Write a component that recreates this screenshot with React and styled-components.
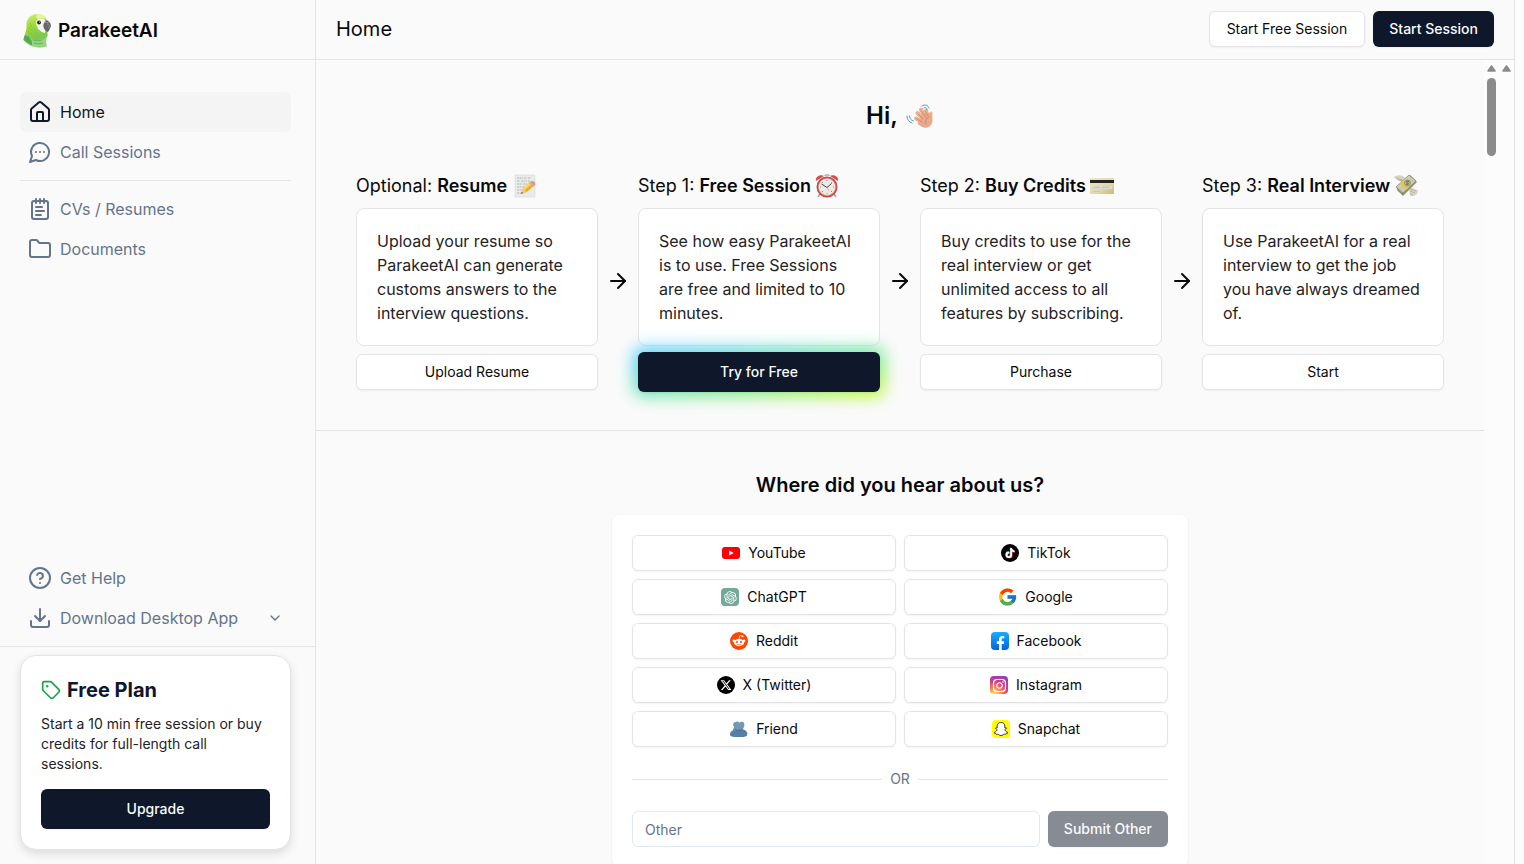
import React from 'react'
import styled, { createGlobalStyle, css } from 'styled-components'
import {
  ArrowRight,
  ChevronDown,
  CircleQuestionMark,
  Download,
  Folder,
  House,
  NotepadText,
  Tag,
} from 'lucide-react'
import { FcGoogle } from 'react-icons/fc'
import { FaFacebookF, FaInstagram, FaSnapchatGhost, FaTiktok } from 'react-icons/fa'
import { FaXTwitter } from 'react-icons/fa6'
import { RiOpenaiFill } from 'react-icons/ri'

const THEME = {
  BACKGROUND: '#fafafa',
  SURFACE: '#ffffff',
  TRACK: '#fcfcfc',
  BORDER: '#e4e4e7',
  ACTIVE: '#f4f4f5',
  PRIMARY: '#0f172a',
  TEXT: '#09090b',
  TEXT_SOFT: '#1f2226',
  MUTED: '#64748b',
  GREEN: '#16a34a',
  THUMB: '#8b8b8b',
}

const GlobalStyle = createGlobalStyle`
  *,
  *::before,
  *::after {
    box-sizing: border-box;
  }

  body {
    margin: 0;
    background: ${THEME.BACKGROUND};
    color: ${THEME.TEXT};
    font-family: Inter, 'Liberation Sans', sans-serif;
    font-size: 16px;
    line-height: 24px;
  }

  h1, h2, h3, p {
    margin: 0;
  }

  button, input {
    font-family: inherit;
  }

  svg {
    flex-shrink: 0;
  }
`

/* ---------- page ---------- */

const Page = styled.div`
  display: flex;
  height: 100vh;
  overflow: hidden;
  padding-right: 9px;
  background: ${THEME.TRACK};
`

const Sidebar = styled.aside`
  display: flex;
  flex-direction: column;
  flex: 0 0 316px;
  background: ${THEME.BACKGROUND};
  border-right: 1px solid ${THEME.BORDER};
`

const Main = styled.main`
  display: flex;
  flex-direction: column;
  flex: 1;
  min-width: 0;
  background: ${THEME.BACKGROUND};
  border-right: 1px solid ${THEME.BORDER};
`

const Bar = styled.header`
  display: flex;
  align-items: center;
  flex: 0 0 60px;
  gap: 8px;
  padding: 0 20px 2px;
  border-bottom: 1px solid ${THEME.BORDER};
`

const Brand = styled.a`
  display: flex;
  align-items: center;
  gap: 4px;
  padding-top: 5px;
  color: ${THEME.TEXT};
  font-size: 19px;
  font-weight: 600;
  line-height: 28px;
  text-decoration: none;
`

const PageTitle = styled.h1`
  flex: 1;
  font-size: 20px;
  font-weight: 400;
  line-height: 28px;
`

/* ---------- shared controls ---------- */

const Button = styled.button`
  display: flex;
  align-items: center;
  justify-content: center;
  gap: 8px;
  height: ${({ $tall }) => ($tall ? 40 : 36)}px;
  width: ${({ $wide }) => ($wide ? '100%' : 'auto')};
  padding: 0 17px;
  border: 1px solid ${THEME.BORDER};
  border-radius: 6px;
  background: ${THEME.SURFACE};
  box-shadow: 0 1px 2px rgba(0, 0, 0, 0.05);
  color: ${THEME.TEXT};
  font-size: 14px;
  font-weight: 400;
  line-height: 20px;
  white-space: nowrap;
  cursor: pointer;

  ${({ $primary }) =>
    $primary &&
    css`
      padding: 0 16px;
      border: 0;
      background: ${THEME.PRIMARY};
      color: #f8fafc;
      font-weight: 500;
    `}

  &:disabled {
    background: #878b94;
    cursor: default;
  }
`

/* ---------- sidebar ---------- */

const Nav = styled.nav`
  display: flex;
  flex-direction: column;
  flex: 1;
  padding: 32px 24px 8px 20px;
`

const NavItem = styled.a`
  display: flex;
  align-items: center;
  gap: 8px;
  height: 40px;
  padding: 0 8px;
  border-radius: 6px;
  background: ${({ $active }) => ($active ? THEME.ACTIVE : 'transparent')};
  color: ${({ $active }) => ($active ? THEME.PRIMARY : THEME.MUTED)};
  text-decoration: none;

  span {
    flex: 1;
  }
`

const NavRule = styled.hr`
  width: 100%;
  height: 1px;
  margin: 8px 0;
  border: 0;
  background: ${THEME.BORDER};
`

const Spacer = styled.div`
  flex: 1;
`

const PlanArea = styled.div`
  padding: 8px 24px 14px 20px;
  border-top: 1px solid ${THEME.BORDER};
`

const PlanCard = styled.section`
  padding: 20px;
  border: 1px solid ${THEME.BORDER};
  border-radius: 16px;
  background: ${THEME.SURFACE};
  box-shadow: 0 4px 10px rgba(0, 0, 0, 0.12);
`

const PlanTitle = styled.h2`
  display: flex;
  align-items: center;
  gap: 6px;
  color: ${THEME.PRIMARY};
  font-size: 20px;
  font-weight: 700;
  line-height: 28px;
`

const PlanText = styled.p`
  padding: 10px 0 15px;
  color: ${THEME.TEXT_SOFT};
  font-size: 14px;
  line-height: 20px;
`

/* ---------- content ---------- */

const Scroller = styled.div`
  display: flex;
  flex: 1;
  min-height: 0;
`

const Content = styled.div`
  flex: 1;
  min-width: 0;
  overflow: hidden;
`

const Section = styled.section`
  display: flex;
  flex-direction: column;
  align-items: center;
  gap: ${({ $gap }) => $gap}px;
  padding: 40px;

  & + & {
    border-top: 1px solid ${THEME.BORDER};
  }
`

const Greeting = styled.h2`
  display: flex;
  align-items: center;
  gap: 8px;
  font-size: 24px;
  font-weight: 600;
  line-height: 32px;
`

const Heading = styled.h2`
  font-size: 20px;
  font-weight: 600;
  line-height: 28px;
`

const Steps = styled.div`
  display: flex;
  align-items: center;
  width: 100%;
`

const StepArrow = styled.div`
  display: flex;
  justify-content: center;
  flex: 0 0 40px;
`

const StepColumn = styled.div`
  display: flex;
  flex-direction: column;
  flex: 1;
  min-width: 0;
  gap: 8px;
`

const StepTitle = styled.h3`
  display: flex;
  align-items: center;
  gap: 4px;
  font-size: 18px;
  font-weight: 400;
  line-height: 28px;
  white-space: nowrap;

  b {
    font-weight: 600;
  }
`

const StepCard = styled.p`
  padding: 20px;
  border: 1px solid ${THEME.BORDER};
  border-radius: 8px;
  background: ${THEME.SURFACE};
  color: ${THEME.TEXT_SOFT};
`

const StepAction = styled.div`
  display: flex;
  align-items: center;
  height: 36px;
`

const Glow = styled.div`
  position: relative;
  z-index: 1;
  width: 100%;

  &::before {
    content: '';
    position: absolute;
    inset: -5px;
    border-radius: 10px;
    background: linear-gradient(to bottom right, #5fd0ff 10%, #74e8ae 50%, #8fee7c 70%, #c0f83c 92%);
    filter: blur(8px);
  }

  ${Button} {
    position: relative;
  }
`

/* ---------- survey ---------- */

const Survey = styled.form`
  display: flex;
  flex-direction: column;
  gap: 20px;
  width: 100%;
  max-width: 576px;
  padding: 20px;
  border-radius: 8px;
  background: ${THEME.SURFACE};
  box-shadow: 0 1px 3px rgba(0, 0, 0, 0.08);
`

const Sources = styled.div`
  display: grid;
  grid-template-columns: 1fr 1fr;
  gap: 8px;
`

const Or = styled.div`
  display: flex;
  align-items: center;
  gap: 8px;
  color: ${THEME.MUTED};
  font-size: 14px;

  &::before,
  &::after {
    content: '';
    flex: 1;
    height: 1px;
    background: ${THEME.BORDER};
  }
`

const OtherRow = styled.div`
  display: flex;
  gap: 8px;
`

const OtherInput = styled.input`
  flex: 1;
  min-width: 0;
  height: 36px;
  padding: 0 12px;
  border: 1px solid #e2e8f0;
  border-radius: 6px;
  background: ${THEME.SURFACE};
  font-size: 14px;

  &::placeholder {
    color: ${THEME.MUTED};
  }
`

const Logo = styled.span`
  display: flex;
  align-items: center;
  justify-content: center;
  width: 18px;
  height: 18px;
  border-radius: ${({ $round }) => ($round ? '9px' : '4px')};
  background: ${({ $fill }) => $fill || 'transparent'};
  color: #ffffff;
`

/* ---------- scroll bars ---------- */

const Track = styled.div`
  display: flex;
  flex-direction: column;
  align-items: center;
  flex: 0 0 15px;
  gap: 6px;
  padding-top: 5px;
  background: ${THEME.TRACK};
`

const Thumb = styled.div`
  width: 9px;
  height: 78px;
  border-radius: 5px;
  background: ${THEME.THUMB};
`

const ScrollBar = ({ thumb = false }) => (
  <Track aria-hidden="true">
    <svg width="9" height="7" viewBox="0 0 9 7">
      <path d="M4.500 1 8 6H1Z" fill={THEME.THUMB} stroke={THEME.THUMB} strokeWidth="1.600" strokeLinejoin="round" />
    </svg>
    {thumb && <Thumb />}
  </Track>
)

/* ---------- drawings ---------- */

const Parrot = () => (
  <svg width="34" height="36" viewBox="0 0 34 36" aria-hidden="true">
    <defs>
      <linearGradient id="head" x1="0" y1="0" x2="0.300" y2="1">
        <stop offset="0" stopColor="#d6ef78" />
        <stop offset="0.500" stopColor="#9fd93c" />
        <stop offset="1" stopColor="#7cc854" />
      </linearGradient>
    </defs>
    <path d="M6 20C4 22 4 24 3.500 27c2 3 5 5 9 6.500 5 1.500 10 1.500 14.500 0-1.500-4-1-7 .5-12Z" fill="#96d47f" />
    <path d="M18 1C10 1 6 6 6.500 13c0 4-1 6-1.500 8 3 4 8 6 12 6 5 0 9-1 10.500-4V15C28 6 25 1 18 1Z" fill="url(#head)" />
    <path d="M5 22c-1 2-1 3-1.500 5l8 5.500c2-3-1-8-6.500-10.500Z" fill="#55ab52" />
    <path d="M9 14c2 4 6 5 10 8M8 18c3 4 6 4 9 6M10 10c1 4 3 6 6 7" stroke="#7cc138" strokeWidth="0.800" fill="none" />
    <path d="M13 27c3 1 6 1 9 0M14 30c3 1 6 1 9 0M6 24l3 5M8 23l3 5" stroke="#4da352" strokeWidth="0.700" fill="none" />
    <path d="M16 8c3-4 9-3 10 1l-1 11c-5-1-9-5-9-12Z" fill="#f6f7f0" />
    <path d="M18 1c4 0 7 2 8 5-3-1-5-1-8 0-2-1-3-3 0-5Z" fill="#eaf3a0" />
    <circle cx="19" cy="9.500" r="1.900" fill="#20241f" />
    <circle cx="19.500" cy="9" r="0.500" fill="#fff" />
    <path d="M24 10c2-3 7-2 7 3-1 3-2 4-3 6-3-1-6-5-4-9Z" fill="#63686d" />
    <path d="M24.500 8c1-1.500 3.500-1 4.500.5L28 10l-3-.5Z" fill="#a0a3a3" />
    <circle cx="27" cy="8.500" r="0.700" fill="#30343a" />
    <path d="M27 11c2 0 3 2 2 4" stroke="#8c9294" strokeWidth="1" fill="none" />
  </svg>
)

const MessageDots = () => (
  <svg
    width="24"
    height="24"
    viewBox="0 0 24 24"
    fill="none"
    stroke="currentColor"
    strokeWidth="2"
    strokeLinecap="round"
    strokeLinejoin="round"
    aria-hidden="true"
  >
    <path d="M7.900 20A9 9 0 1 0 4 16.100L2 22Z" />
    <path d="M8 12h.01M12 12h.01M16 12h.01" />
  </svg>
)

const Wave = () => (
  <svg width="28" height="28" viewBox="0 0 28 28" aria-hidden="true">
    <g fill="none" stroke="#edb091" strokeLinecap="round">
      <path d="m20 19-8.500-8" strokeWidth="4" />
      <path d="m21 18-6-10.500" strokeWidth="4" />
      <path d="m19 21-9-4.500" strokeWidth="4" />
      <path d="m19 23-5.500-2" strokeWidth="4" />
      <path d="m23 17-3-8" strokeWidth="4" />
      <path d="m24 19 1-8" strokeWidth="3" />
    </g>
    <path d="M15 14c3-3 8-4 11-1 1 5 1 9-3 12-4 2-8 0-10-3Z" fill="#e9a98b" />
    <path d="m12 12 5 5m-2-8 5 6m-9 2 5 3M19 9l3 5" fill="none" stroke="#cb8065" strokeWidth="0.800" strokeLinecap="round" />
    <path d="M23 15c-3 1-4 4-3 7" fill="none" stroke="#cb8065" strokeWidth="0.900" />
    <path d="M16 4c3-2 6-1 7 2M18 6c2-1 3 0 3 2M1 14c0 4 2 6 5 7M3.500 14c0 2 1 4 4 5" fill="none" stroke="#4e9bc5" strokeWidth="1" strokeLinecap="round" />
  </svg>
)

const Memo = () => (
  <svg width="26" height="24" viewBox="-2 0 26 24" aria-hidden="true">
    <path d="M2 1h20v22H2Z" fill="#e9eaea" stroke="#d2d3d3" strokeWidth="0.500" />
    <path d="M4 4h6m1 0h3m1 0h3M4 7h3m1 0h6m1 0h2M4 10h5m1 0h4M4 13h7M4 16h5M4 19h6" stroke="#b5b7b8" strokeWidth="1" strokeDasharray="2 .6" />
    <path d="m8 20 2-6 8-7 4 4-8 7Z" fill="#f3bd32" />
    <path d="m9.500 16 9-8" stroke="#ffdc68" strokeWidth="1.800" />
    <path d="m12 18 9-8" stroke="#db9524" strokeWidth="1" />
    <path d="m17 8 2-1c2 0 4 1 3 4l-1 1Z" fill="#e89187" />
    <path d="m16.500 8.500 4 4" stroke="#b5b8b9" strokeWidth="1.200" />
    <path d="m8 20 2-6c1 2 2 3 4 4Z" fill="#edc891" />
    <path d="m8 20 1-2 1 1Z" fill="#4a4039" />
  </svg>
)

const Clock = () => (
  <svg width="24" height="24" viewBox="0 0 24 24" aria-hidden="true">
    <path d="m5 20-2 3m16-3 2 3" stroke="#aaa4a0" strokeWidth="1.500" />
    <path d="M1 7c-1-4 4-7 8-5ZM23 7c1-4-4-7-8-5Z" fill="#d44b4d" />
    <path d="M10 2V1h4v1" fill="none" stroke="#939393" />
    <circle cx="12" cy="13" r="10.500" fill="#c84646" />
    <circle cx="12" cy="13" r="8.500" fill="#eeebe7" stroke="#f0aaa5" strokeWidth="0.600" />
    <path d="M12 6v1m0 12v1m-7-7h1m12 0h1M7 8l1 1m8 8 1 1m0-10-1 1m-8 8-1 1" stroke="#777" strokeWidth="0.800" />
    <path d="m6.500 10 5.500 3.500 4.500-4" fill="none" stroke="#444" strokeWidth="1" />
    <path d="m12 13 2 4" stroke="#db7570" strokeWidth="0.600" />
  </svg>
)

const CreditCard = () => (
  <svg width="24" height="24" viewBox="0 0 24 24" aria-hidden="true">
    <defs>
      <linearGradient id="gold" x1="0" y1="0" x2="1" y2="1">
        <stop offset="0" stopColor="#eee7bd" />
        <stop offset="0.600" stopColor="#e2d9aa" />
        <stop offset="1" stopColor="#c8b873" />
      </linearGradient>
    </defs>
    <rect y="4" width="24" height="16" rx="1" fill="url(#gold)" />
    <path d="M0 6h24v3H0Z" fill="#242321" />
    <path d="M2 12h20v3H2Z" fill="#dcdad0" />
    <path d="M4 14c3-2 4 0 6-1m2 1c3-2 4 0 7-1" fill="none" stroke="#b4b3ab" strokeWidth="0.700" />
    <path d="M3 17.500h7" stroke="#c9bf94" strokeWidth="0.700" />
  </svg>
)

const Money = () => (
  <svg width="24" height="24" viewBox="0 0 24 24" aria-hidden="true">
    <path d="M8 8C5 6 2 6 0 3c3-2 8-3 11 1Z" fill="#d5d2bd" />
    <path d="M15 13c4 0 5 3 9 3 0 4-3 7-8 6Z" fill="#d9d5c8" />
    <path d="m2 4 6 2m-4 0 5 1m7 8 6 2m-6 0 5 2m-5 0 3 2" stroke="#aaa58e" strokeWidth="0.700" />
    <path d="m3 15 13-14 7 7L9 22Z" fill="#92936f" />
    <path d="m2 13 13-12 7 6L8 20Z" fill="#cbcbae" stroke="#818360" strokeWidth="0.700" />
    <path d="m6 9 4-3 6 6-4 4Z" fill="#e6c45d" />
    <circle cx="13.500" cy="9" r="3" fill="#b8b790" stroke="#7d7e58" strokeWidth="0.600" />
    <path d="M15 7.500c-3-1-3 1-1.500 1.500s1.500 2-1.500 1" fill="none" stroke="#55563a" strokeWidth="0.900" />
    <path d="m3 16 6 5M3 14l6 5" stroke="#666849" strokeWidth="0.600" />
  </svg>
)

const YouTubeLogo = () => (
  <svg width="18" height="18" viewBox="0 0 18 18" aria-hidden="true">
    <rect y="3" width="18" height="12" rx="3" fill="#ff0000" />
    <path d="M7.200 6.400v5.200L11.800 9Z" fill="#ffffff" />
  </svg>
)

const ChatGptLogo = () => (
  <Logo $fill="#74a99a">
    <RiOpenaiFill size={15} />
  </Logo>
)

const RedditLogo = () => (
  <svg width="18" height="18" viewBox="0 0 18 18" aria-hidden="true">
    <circle cx="9" cy="9" r="9" fill="#ff4500" />
    <circle cx="3.900" cy="8.800" r="1.300" fill="#fff" />
    <circle cx="14.100" cy="8.800" r="1.300" fill="#fff" />
    <ellipse cx="9" cy="10.500" rx="5.200" ry="3.700" fill="#fff" />
    <path d="m9 7 .8-3.500 2.500.6" fill="none" stroke="#fff" strokeWidth="0.700" />
    <circle cx="12.500" cy="4.200" r="1" fill="#fff" />
    <circle cx="7" cy="9.900" r="1" fill="#ff4500" />
    <circle cx="11" cy="9.900" r="1" fill="#ff4500" />
    <path d="M6.800 12.200c1.300 1 3.100 1 4.400 0" fill="none" stroke="#ff4500" strokeWidth="0.700" />
  </svg>
)

const XLogo = () => (
  <Logo $fill="#000000" $round>
    <FaXTwitter size={12} />
  </Logo>
)

const FriendLogo = () => (
  <svg width="18" height="18" viewBox="0 0 18 18" aria-hidden="true">
    <path d="M6 2c2-1 3 0 3 1 1-1 4-2 5 0 1 2 0 4-1 6l3 2 1 5H3V9c2-1 1-3 0-4 0-2 1-3 3-3Z" fill="#7198b8" />
    <path d="M0 15c0-3 1-4 4-5 4 1 6-1 10 0 3 1 4 3 3 5-1 2-3 2-8 2s-8 0-9-2Z" fill="#557fa4" />
    <path d="M5 9c2 2 5 2 7 0" fill="none" stroke="#426d91" />
  </svg>
)

const TikTokLogo = () => (
  <svg width="18" height="18" viewBox="0 0 18 18" aria-hidden="true">
    <circle cx="9" cy="9" r="9" fill="#000" />
    <FaTiktok x="3.600" y="3.600" size={10} color="#25f4ee" />
    <FaTiktok x="4.600" y="4.600" size={10} color="#fe2c55" />
    <FaTiktok x="4.100" y="4.100" size={10} color="#fff" />
  </svg>
)

const GoogleLogo = () => <FcGoogle size={18} viewBox="4 3 42 42" aria-hidden="true" />

const FacebookLogo = () => (
  <svg width="18" height="18" viewBox="0 0 18 18" aria-hidden="true">
    <defs>
      <linearGradient id="facebook" x1="0" y1="0" x2="0" y2="1">
        <stop offset="0" stopColor="#18acfe" />
        <stop offset="1" stopColor="#0163e0" />
      </linearGradient>
    </defs>
    <rect width="18" height="18" rx="4" fill="url(#facebook)" />
    <FaFacebookF x="2.500" y="4" size={14} color="#fff" />
  </svg>
)

const InstagramLogo = () => (
  <Logo $fill="radial-gradient(circle at 25% 105%, #fdd267 0 10%, #f7774b 35%, #d53692 60%, #7045c8 100%)">
    <FaInstagram size={15} />
  </Logo>
)

const SnapchatLogo = () => (
  <svg width="18" height="18" viewBox="0 0 18 18" aria-hidden="true">
    <rect width="18" height="18" rx="4" fill="#fffc00" />
    <FaSnapchatGhost x="2" y="2" size={14} color="#fff" stroke="#222" strokeWidth="32" />
  </svg>
)

/* ---------- data ---------- */

const STEPS = [
  {
    label: 'Optional:',
    name: 'Resume',
    Emoji: Memo,
    text: 'Upload your resume so ParakeetAI can generate customs answers to the interview questions.',
    action: 'Upload Resume',
  },
  {
    label: 'Step 1:',
    name: 'Free Session',
    Emoji: Clock,
    text: 'See how easy ParakeetAI is to use. Free Sessions are free and limited to 10 minutes.',
    action: 'Try for Free',
    featured: true,
  },
  {
    label: 'Step 2:',
    name: 'Buy Credits',
    Emoji: CreditCard,
    text: 'Buy credits to use for the real interview or get unlimited access to all features by subscribing.',
    action: 'Purchase',
  },
  {
    label: 'Step 3:',
    name: 'Real Interview',
    Emoji: Money,
    text: 'Use ParakeetAI for a real interview to get the job you have always dreamed of.',
    action: 'Start',
  },
]

const SOURCES = [
  { name: 'YouTube', Icon: YouTubeLogo },
  { name: 'TikTok', Icon: TikTokLogo },
  { name: 'ChatGPT', Icon: ChatGptLogo },
  { name: 'Google', Icon: GoogleLogo },
  { name: 'Reddit', Icon: RedditLogo },
  { name: 'Facebook', Icon: FacebookLogo },
  { name: 'X (Twitter)', Icon: XLogo },
  { name: 'Instagram', Icon: InstagramLogo },
  { name: 'Friend', Icon: FriendLogo },
  { name: 'Snapchat', Icon: SnapchatLogo },
]

const Step = ({ label, name, Emoji, text, action, featured = false }) => (
  <StepColumn>
    <StepTitle>
      <span>
        {label} <b>{name}</b>
      </span>
      <Emoji />
    </StepTitle>
    <StepCard>{text}</StepCard>
    <StepAction>
      {featured ? (
        <Glow>
          <Button type="button" $primary $tall $wide>
            {action}
          </Button>
        </Glow>
      ) : (
        <Button type="button" $wide>
          {action}
        </Button>
      )}
    </StepAction>
  </StepColumn>
)

const App = () => (
  <>
    <GlobalStyle />
    <Page>
      <Sidebar>
        <Bar>
          <Brand href="#">
            <Parrot />
            ParakeetAI
          </Brand>
        </Bar>
        <Nav>
          <NavItem href="#" $active>
            <House />
            <span>Home</span>
          </NavItem>
          <NavItem href="#">
            <MessageDots />
            <span>Call Sessions</span>
          </NavItem>
          <NavRule />
          <NavItem href="#">
            <NotepadText />
            <span>CVs / Resumes</span>
          </NavItem>
          <NavItem href="#">
            <Folder />
            <span>Documents</span>
          </NavItem>
          <Spacer />
          <NavItem href="#">
            <CircleQuestionMark />
            <span>Get Help</span>
          </NavItem>
          <NavItem href="#">
            <Download />
            <span>Download Desktop App</span>
            <ChevronDown size={16} />
          </NavItem>
        </Nav>
        <PlanArea>
          <PlanCard>
            <PlanTitle>
              <Tag size={20} color={THEME.GREEN} />
              Free Plan
            </PlanTitle>
            <PlanText>Start a 10 min free session or buy credits for full-length call sessions.</PlanText>
            <Button type="button" $primary $tall $wide>
              Upgrade
            </Button>
          </PlanCard>
        </PlanArea>
      </Sidebar>

      <Main>
        <Bar>
          <PageTitle>Home</PageTitle>
          <Button type="button">Start Free Session</Button>
          <Button type="button" $primary>
            Start Session
          </Button>
        </Bar>
        <Scroller>
          <Content>
            <Section $gap={40}>
              <Greeting>
                Hi,
                <Wave />
              </Greeting>
              <Steps>
                {STEPS.map((step, i) => (
                  <React.Fragment key={step.name}>
                    {i > 0 && (
                      <StepArrow>
                        <ArrowRight />
                      </StepArrow>
                    )}
                    <Step {...step} />
                  </React.Fragment>
                ))}
              </Steps>
            </Section>
            <Section $gap={16}>
              <Heading>Where did you hear about us?</Heading>
              <Survey>
                <Sources>
                  {SOURCES.map(({ name, Icon }) => (
                    <Button type="button" key={name}>
                      <Icon />
                      {name}
                    </Button>
                  ))}
                </Sources>
                <Or>OR</Or>
                <OtherRow>
                  <OtherInput type="text" placeholder="Other" aria-label="Other" />
                  <Button type="submit" $primary disabled>
                    Submit Other
                  </Button>
                </OtherRow>
              </Survey>
            </Section>
          </Content>
          <ScrollBar thumb />
          <ScrollBar />
        </Scroller>
      </Main>
    </Page>
  </>
)

export default App
